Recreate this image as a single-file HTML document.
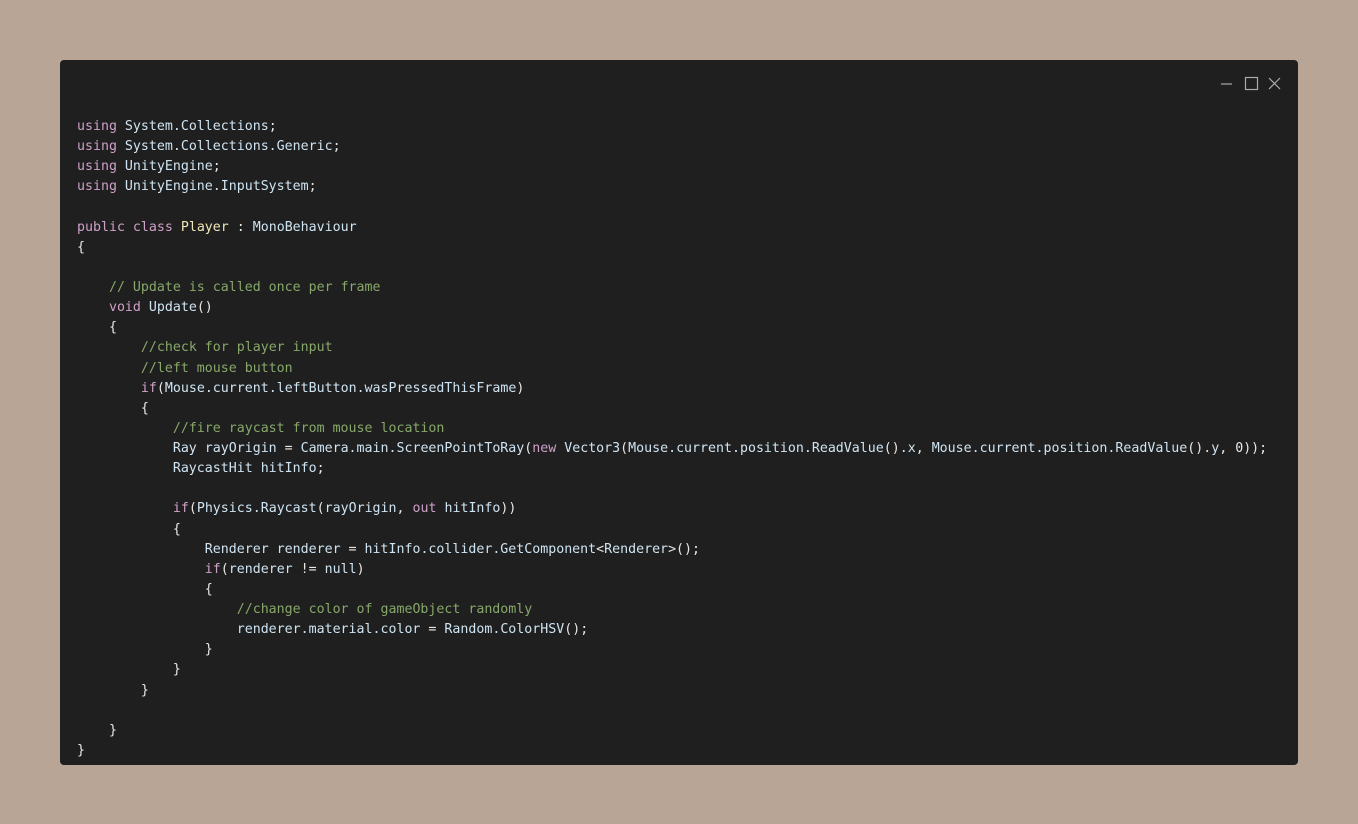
<!DOCTYPE html>
<html><head><style>
html,body{margin:0;padding:0;}
body{width:1358px;height:824px;background:#b8a596;position:relative;overflow:hidden;}
.win{position:absolute;left:60px;top:60px;width:1238px;height:705px;background:#1f1f1f;border-radius:4px;}
pre{position:absolute;left:17px;top:57px;margin:0;font-family:"DejaVu Sans Mono","Liberation Mono",monospace;font-size:13.28px;line-height:20.13px;color:#cfe4f2;}
.k{color:#cfa0c8}.c{color:#87a86a}.y{color:#efe7b8}.w{color:#e8e8e8}
</style></head><body>
<div class="win">
<svg style="position:absolute;left:1160px;top:16px" width="64" height="16" viewBox="0 0 64 16">
<line x1="1" y1="8" x2="12" y2="8" stroke="#aaa" stroke-width="1.2"/>
<rect x="25.5" y="1.5" width="12" height="12" fill="none" stroke="#aaa" stroke-width="1.2"/>
<path d="M49 2 L60 13 M60 2 L49 13" stroke="#aaa" stroke-width="1.2"/>
</svg>
<pre><span class="k">using</span> System.Collections<span class="w">;</span>
<span class="k">using</span> System.Collections.Generic<span class="w">;</span>
<span class="k">using</span> UnityEngine<span class="w">;</span>
<span class="k">using</span> UnityEngine.InputSystem<span class="w">;</span>

<span class="k">public class</span> <span class="y">Player</span> <span class="w">:</span> MonoBehaviour
<span class="w">{</span>

    <span class="c">// Update is called once per frame</span>
    <span class="k">void</span> Update<span class="w">()</span>
    <span class="w">{</span>
        <span class="c">//check for player input</span>
        <span class="c">//left mouse button</span>
        <span class="k">if</span><span class="w">(</span>Mouse.current.leftButton.wasPressedThisFrame<span class="w">)</span>
        <span class="w">{</span>
            <span class="c">//fire raycast from mouse location</span>
            Ray rayOrigin <span class="w">=</span> Camera.main.ScreenPointToRay<span class="w">(</span><span class="k">new</span> Vector3<span class="w">(</span>Mouse.current.position.ReadValue<span class="w">()</span>.x<span class="w">,</span> Mouse.current.position.ReadValue<span class="w">()</span>.y<span class="w">, 0));</span>
            RaycastHit hitInfo<span class="w">;</span>

            <span class="k">if</span><span class="w">(</span>Physics.Raycast<span class="w">(</span>rayOrigin<span class="w">,</span> <span class="k">out</span> hitInfo<span class="w">))</span>
            <span class="w">{</span>
                Renderer renderer <span class="w">=</span> hitInfo.collider.GetComponent<span class="w">&lt;</span>Renderer<span class="w">&gt;();</span>
                <span class="k">if</span><span class="w">(</span>renderer <span class="w">!=</span> null<span class="w">)</span>
                <span class="w">{</span>
                    <span class="c">//change color of gameObject randomly</span>
                    renderer.material.color <span class="w">=</span> Random.ColorHSV<span class="w">();</span>
                <span class="w">}</span>
            <span class="w">}</span>
        <span class="w">}</span>

    <span class="w">}</span>
<span class="w">}</span></pre>
</div>
</body></html>
